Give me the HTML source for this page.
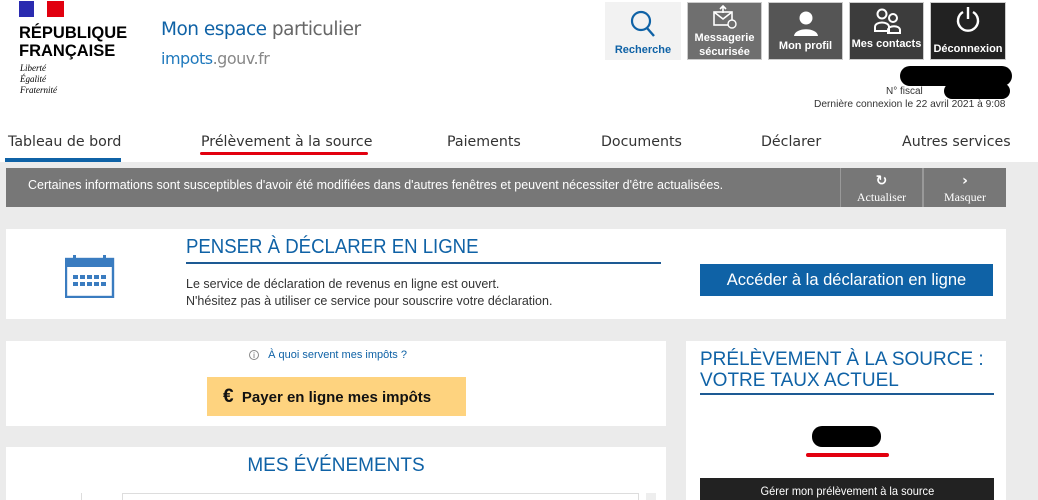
<!DOCTYPE html>
<html><head><meta charset="utf-8"><style>
*{margin:0;padding:0;box-sizing:border-box}
body{width:1038px;height:500px;overflow:hidden;position:relative;background:#ebebeb;font-family:"Liberation Sans",sans-serif}
.a{position:absolute}
.top{left:0;top:0;width:1038px;height:162px;background:#fff}
.nx{font-family:"DejaVu Sans","Liberation Sans",sans-serif;font-size:14.2px;color:#333;top:134px;white-space:nowrap}
.btn{top:2px;height:58px;color:#fff;font-weight:bold;font-size:11px;text-align:center;border:1px solid #ccc}
.card{background:#fff}
.cond{display:inline-block;transform-origin:left center;white-space:nowrap}
</style></head><body>
<div class="a top"></div>
<div class="a" style="left:19px;top:1px;width:15px;height:16px;background:#2a2bb0"></div>
<div class="a" style="left:34px;top:1px;width:13px;height:16px;background:#fff"></div>
<div class="a" style="left:47px;top:1px;width:17px;height:16px;background:#e1000f"></div>
<div class="a" style="left:19px;top:24px;font-weight:bold;font-size:16.5px;line-height:18px;color:#000">RÉPUBLIQUE<br>FRANÇAISE</div>
<div class="a" style="left:20px;top:63px;font-family:'Liberation Serif',serif;font-style:italic;font-size:9px;line-height:11px;color:#000">Liberté<br>Égalité<br>Fraternité</div>
<div class="a" style="left:161px;top:19px;font-family:'DejaVu Sans',sans-serif;font-size:18.5px;color:#0f62a6;white-space:nowrap;letter-spacing:-0.5px">Mon espace <span style="color:#666">particulier</span></div>
<div class="a" style="left:161px;top:49px;font-family:'DejaVu Sans',sans-serif;font-size:16px;color:#1f79bd;letter-spacing:-0.5px">impots<span style="color:#888">.gouv.fr</span></div>
<div class="a btn" style="left:605px;width:76px;background:#f2f2f2;color:#0f62a6;border-color:#f2f2f2">
<svg width="30" height="30" viewBox="0 0 30 30" style="margin-top:6px"><circle cx="13" cy="12" r="9" fill="none" stroke="#0f62a6" stroke-width="2.2"/><path d="M19 19 L26 27" stroke="#0f62a6" stroke-width="2.4"/></svg>
<div style="margin-top:2px">Recherche</div></div>
<div class="a btn" style="left:687px;width:75px;background:#6f6f6f">
<svg width="26" height="26" viewBox="0 0 26 26" style="margin-top:2px"><rect x="2" y="7" width="18" height="13" fill="none" stroke="#fff" stroke-width="1.6"/><path d="M2 7 L11 14 L20 7 M11 1 V8 M8 4 L11 1 L14 4" fill="none" stroke="#fff" stroke-width="1.6"/><circle cx="20" cy="19" r="4" fill="#6f6f6f" stroke="#fff" stroke-width="1.4"/></svg>
<div style="line-height:14px;margin-top:-3px">Messagerie<br>sécurisée</div></div>
<div class="a btn" style="left:768px;width:75px;background:#555">
<svg width="28" height="28" viewBox="0 0 28 28" style="margin-top:6px"><circle cx="14" cy="9" r="6.5" fill="#fff"/><path d="M2 27 C3 18 25 18 26 27 Z" fill="#fff"/></svg>
<div style="margin-top:0px">Mon profil</div></div>
<div class="a btn" style="left:849px;width:75px;background:#3c3c3c">
<svg width="28" height="28" viewBox="0 0 28 28" style="margin-top:4px"><circle cx="9" cy="7" r="4.5" fill="none" stroke="#fff" stroke-width="2"/><circle cx="20" cy="11" r="4" fill="none" stroke="#fff" stroke-width="2"/><path d="M2 24 V20 C2 14 16 14 16 20 V24 Z M15 26 V23 C15 18 27 18 27 23 V26 Z" fill="none" stroke="#fff" stroke-width="2"/></svg>
<div style="margin-top:0px">Mes contacts</div></div>
<div class="a btn" style="left:930px;width:76px;background:#222">
<svg width="28" height="28" viewBox="0 0 28 28" style="margin-top:3px"><path d="M9 6 A10 10 0 1 0 19 6" fill="none" stroke="#fff" stroke-width="2.4"/><path d="M14 1 V13" stroke="#fff" stroke-width="2.4"/></svg>
<div style="margin-top:6px;font-size:11px">Déconnexion</div></div>
<div class="a" style="left:900px;top:66px;width:112px;height:20px;background:#000;border-radius:10px"></div>
<div class="a" style="left:944px;top:83px;width:66px;height:16px;background:#000;border-radius:8px"></div>
<div class="a" style="left:886px;top:86px;font-size:10px;color:#333">N° fiscal</div>
<div class="a" style="left:814px;top:99px;font-size:10.2px;color:#333;white-space:nowrap">Dernière connexion le 22 avril 2021 à 9:08</div>
<div class="a nx" style="left:8px">Tableau de bord</div>
<div class="a" style="left:5px;top:158px;width:116px;height:4px;background:#0f62a6"></div>
<div class="a nx" style="left:201px">Prélèvement à la source</div>
<div class="a" style="left:200px;top:152px;width:168px;height:3px;background:#e2000f;border-radius:2px"></div>
<div class="a nx" style="left:447px">Paiements</div>
<div class="a nx" style="left:601px">Documents</div>
<div class="a nx" style="left:761px">Déclarer</div>
<div class="a nx" style="left:902px">Autres services</div>
<div class="a" style="left:6px;top:168px;width:1000px;height:39px;background:#777"></div>
<div class="a" style="left:28px;top:178px;font-size:12.5px;color:#fff;white-space:nowrap">Certaines informations sont susceptibles d'avoir été modifiées dans d'autres fenêtres et peuvent nécessiter d'être actualisées.</div>
<div class="a" style="left:840px;top:168px;width:1px;height:39px;background:#999"></div>
<div class="a" style="left:922px;top:168px;width:2px;height:39px;background:#999"></div>
<div class="a" style="left:841px;top:173px;width:81px;text-align:center;color:#fff;font-family:'Liberation Serif',serif;font-size:12px;line-height:16px"><b style="font-family:'DejaVu Sans';font-size:14px">↻</b><br>Actualiser</div>
<div class="a" style="left:924px;top:173px;width:82px;text-align:center;color:#fff;font-family:'Liberation Serif',serif;font-size:12px;line-height:16px"><b style="font-family:'DejaVu Sans';font-size:14px">›</b><br>Masquer</div>
<div class="a card" style="left:6px;top:229px;width:1000px;height:90px"></div>
<svg class="a" style="left:65px;top:254px" width="50" height="44" viewBox="0 0 50 44"><rect x="1" y="5" width="47" height="38" fill="none" stroke="#3a7cc0" stroke-width="2.4"/><rect x="1" y="5" width="47" height="8" fill="#3a7cc0"/><rect x="8" y="1" width="3" height="8" fill="#3a7cc0"/><rect x="38" y="1" width="3" height="8" fill="#3a7cc0"/><g fill="#3a7cc0"><rect x="8" y="21" width="5" height="4"/><rect x="15" y="21" width="5" height="4"/><rect x="22" y="21" width="5" height="4"/><rect x="29" y="21" width="5" height="4"/><rect x="36" y="21" width="5" height="4"/><rect x="8" y="28" width="5" height="4"/><rect x="15" y="28" width="5" height="4"/><rect x="22" y="28" width="5" height="4"/><rect x="29" y="28" width="5" height="4"/><rect x="36" y="28" width="5" height="4"/></g></svg>
<div class="a" style="left:186px;top:236px;font-size:20px;color:#0f62a6"><span class="cond" style="transform:scaleX(0.93)">PENSER À DÉCLARER EN LIGNE</span></div>
<div class="a" style="left:186px;top:262px;width:475px;height:2px;background:#1d5a94"></div>
<div class="a" style="left:186px;top:276px;font-size:12.5px;line-height:17px;color:#333;white-space:nowrap">Le service de déclaration de revenus en ligne est ouvert.<br>N'hésitez pas à utiliser ce service pour souscrire votre déclaration.</div>
<div class="a" style="left:700px;top:264px;width:293px;height:32px;background:#0f62a6;color:#fff;font-size:16.5px;line-height:32px;text-align:center">Accéder à la déclaration en ligne</div>
<div class="a card" style="left:6px;top:341px;width:660px;height:85px"></div>
<div class="a" style="left:249px;top:349px;font-size:11px;color:#0f62a6;white-space:nowrap"><span style="color:#666;border:1px solid #888;border-radius:50%;display:inline-block;width:10px;height:10px;line-height:9px;text-align:center;font-size:8px">i</span>&nbsp;&nbsp; À quoi servent mes impôts ?</div>
<div class="a" style="left:207px;top:377px;width:259px;height:39px;background:#fed37f;color:#111;font-weight:bold;font-size:15px;line-height:39px;padding-left:16px;white-space:nowrap"><span style="font-size:19px">€</span>&nbsp; Payer en ligne mes impôts</div>
<div class="a card" style="left:686px;top:341px;width:320px;height:159px"></div>
<div class="a" style="left:700px;top:349px;font-size:19px;line-height:21px;color:#0f62a6"><span class="cond">PRÉLÈVEMENT À LA SOURCE :<br>VOTRE TAUX ACTUEL</span></div>
<div class="a" style="left:700px;top:393px;width:294px;height:2px;background:#1d5a94"></div>
<div class="a" style="left:812px;top:426px;width:69px;height:21px;background:#000;border-radius:10px"></div>
<div class="a" style="left:806px;top:453px;width:83px;height:4px;background:#e2000f;border-radius:2px"></div>
<div class="a" style="left:700px;top:478px;width:294px;height:22px;background:#222;color:#fff;font-size:12px;text-align:center;padding-top:6px"><span class="cond" style="transform:scaleX(0.92);transform-origin:center">Gérer mon prélèvement à la source</span></div>
<div class="a card" style="left:6px;top:447px;width:660px;height:53px"></div>
<div class="a" style="left:0;top:455px;width:672px;text-align:center;font-size:19px;color:#0f62a6">MES ÉVÉNEMENTS</div>
<div class="a" style="left:81px;top:493px;width:1px;height:7px;background:#ddd"></div>
<div class="a" style="left:122px;top:493px;width:517px;height:7px;border:1px solid #ddd;border-bottom:none"></div>
<div class="a" style="left:646px;top:493px;width:10px;height:7px;background:#eee"></div>
</body></html>
